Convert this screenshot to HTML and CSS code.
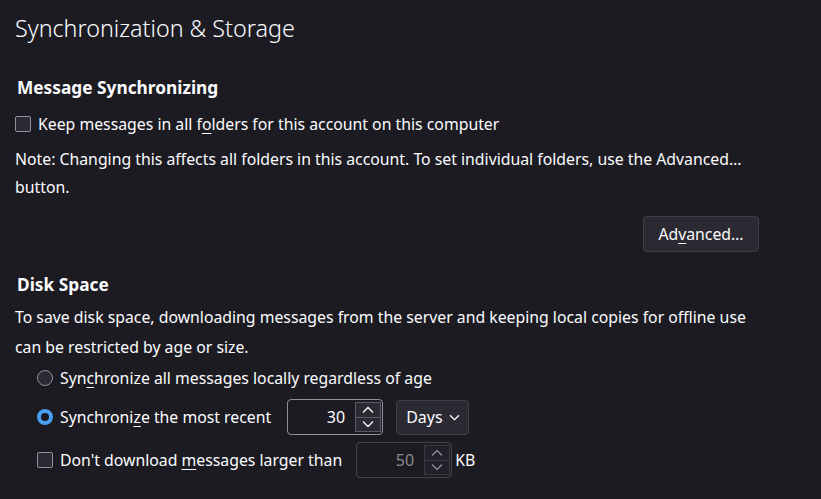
FILE: index.html
```html
<!DOCTYPE html>
<html lang="en">
<head>
<meta charset="utf-8">
<title>Synchronization &amp; Storage</title>
<link rel="stylesheet" href="styles.css">
</head>
<body>
<main class="page">
  <h1 class="title">Synchronization &amp; Storage</h1>

  <section class="group sync">
    <h2 class="heading">Message Synchronizing</h2>
    <label class="row check-row">
      <span class="box"></span>
      <span>Keep messages in all f<u>o</u>lders for this account on this computer</span>
    </label>
    <p class="note">Note: Changing this affects all folders in this account. To set individual folders, use the Advanced… button.</p>
    <div class="actions">
      <button class="btn">Ad<u>v</u>anced…</button>
    </div>
  </section>

  <section class="group disk">
    <h2 class="heading">Disk Space</h2>
    <p class="note">To save disk space, downloading messages from the server and keeping local copies for offline use can be restricted by age or size.</p>
    <div class="options">
      <label class="row opt first">
        <span class="radio"></span>
        <span>Syn<u>c</u>hronize all messages locally regardless of age</span>
      </label>
      <div class="row opt second">
        <span class="radio on"></span>
        <span class="lbl">Synchroni<u>z</u>e the most recent</span>
        <span class="spin">
          <span class="num">30</span>
          <span class="arrows">
            <span class="arr"><svg width="12" height="8" viewBox="0 0 12 8"><path d="M1 6.5 6 1.5 11 6.5" fill="none" stroke="currentColor" stroke-width="1.3"/></svg></span>
            <span class="arr"><svg width="12" height="8" viewBox="0 0 12 8"><path d="M1 1.5 6 6.5 11 1.5" fill="none" stroke="currentColor" stroke-width="1.3"/></svg></span>
          </span>
        </span>
        <span class="select">Days <svg width="11" height="7" viewBox="0 0 11 7"><path d="M1 1.2 5.5 5.7 10 1.2" fill="none" stroke="currentColor" stroke-width="1.3"/></svg></span>
      </div>
      <div class="row opt third">
        <span class="box"></span>
        <span class="lbl short">Don't download <u>m</u>essages larger than</span>
        <span class="spin dis">
          <span class="num">50</span>
          <span class="arrows">
            <span class="arr"><svg width="12" height="8" viewBox="0 0 12 8"><path d="M1 6.5 6 1.5 11 6.5" fill="none" stroke="currentColor" stroke-width="1.3"/></svg></span>
            <span class="arr"><svg width="12" height="8" viewBox="0 0 12 8"><path d="M1 1.5 6 6.5 11 1.5" fill="none" stroke="currentColor" stroke-width="1.3"/></svg></span>
          </span>
        </span>
        <span class="unit">KB</span>
      </div>
    </div>
  </section>
</main>
</body>
</html>
```

FILE: styles.css
```css
html, body {
  margin: 0;
  padding: 0;
  background: #1c1b22;
  color: #fbfbfe;
  font-family: "Noto Sans", "Open Sans", sans-serif;
  font-size: 15.8px;
}
.page {
  padding: 12px 15px 0 15px;
  width: 744px;
}
.title {
  margin: 0;
  font-size: 23.3px;
  font-weight: 300;
  line-height: 32px;
}
.heading {
  margin: 0 0 0 2px;
  font-size: 17.3px;
  font-weight: 700;
  line-height: 24px;
}
.sync { margin-top: 32px; }
.disk { margin-top: 21px; }
.row {
  display: flex;
  align-items: center;
  gap: 7px;
}
.check-row { margin-top: 14px; height: 20px; }
.box {
  width: 14px;
  height: 14px;
  border: 1px solid #8f8f9d;
  border-radius: 2px;
  background: #2b2a33;
  flex: none;
}
.note {
  margin: 11px 0 0 0;
  line-height: 28px;
}
.disk .note { margin-top: 5px; line-height: 30px; }
.actions {
  display: flex;
  justify-content: flex-end;
  margin-top: 15px;
}
.btn {
  font: inherit;
  color: #fbfbfe;
  background: #2b2a33;
  border: 1px solid #403f48;
  border-radius: 4px;
  width: 116px;
  height: 36px;
  padding: 0;
}
.options {
  padding-left: 22px;
  display: flex;
  flex-direction: column;
}
.opt.first { height: 30px; margin-top: 1px; }
.opt.second { height: 36px; margin-top: 6px; }
.opt.third { height: 36px; margin-top: 7px; }
.radio {
  width: 14px;
  height: 14px;
  border: 1px solid #8f8f9d;
  border-radius: 50%;
  background: #2b2a33;
  flex: none;
}
.radio.on {
  width: 8px;
  height: 8px;
  border: 4px solid #4a9ff0;
  background: #1c1b22;
}
.lbl { margin-right: 9px; }
.lbl.short { margin-right: 7px; }
.spin {
  display: flex;
  width: 94px;
  height: 34px;
  border: 1px solid #8f8f9d;
  border-radius: 4px;
  background: #1c1b22;
  box-sizing: content-box;
}
.spin .num {
  flex: 1;
  text-align: right;
  padding-right: 10px;
  line-height: 34px;
  font-size: 16px;
}
.arrows {
  display: flex;
  flex-direction: column;
  width: 26px;
  margin: 2px 1px 2px 0;
  gap: 1px;
  background: #5b5b66;
  border: 1px solid #5b5b66;
  box-sizing: border-box;
}
.arr {
  flex: 1;
  display: flex;
  align-items: center;
  justify-content: center;
  background: #2b2a33;
  color: #fbfbfe;
}
.spin.dis { border-color: #45444d; }
.spin.dis .num { color: #8a8990; }
.spin.dis .arrows { background: #3a3942; border-color: #3a3942; }
.spin.dis .arr { background: #22212a; color: #8a8990; }
.select {
  margin-left: 6px;
  display: flex;
  align-items: center;
  gap: 6px;
  height: 33px;
  padding: 0 8px 0 9px;
  background: #2b2a33;
  border: 1px solid #403f48;
  border-radius: 4px;
  font-size: 16px;
}
.unit { margin-left: -4px; }
u { text-underline-offset: 3px; }
```
